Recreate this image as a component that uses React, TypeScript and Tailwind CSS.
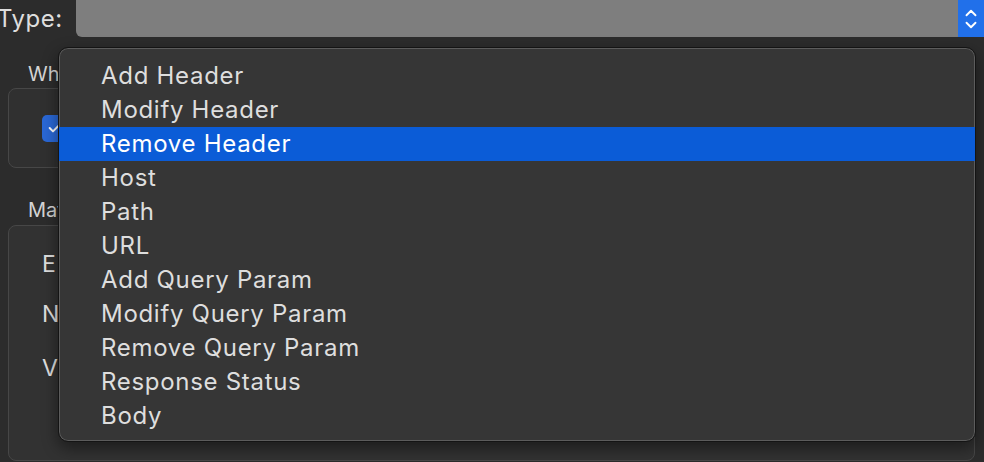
import { ChevronUp, ChevronDown, Check } from "lucide-react";

const items = [
  "Add Header",
  "Modify Header",
  "Remove Header",
  "Host",
  "Path",
  "URL",
  "Add Query Param",
  "Modify Query Param",
  "Remove Query Param",
  "Response Status",
  "Body",
];

const selected = "Remove Header";

export default function App() {
  return (
    <div className="relative w-[984px] h-[462px] overflow-hidden bg-[#2c2c2c] text-[#dedede] font-['Inter','Liberation_Sans',sans-serif]">
      {/* type row */}
      <div className="flex items-start h-[37px]">
        <span className="ml-[-3px] w-[79px] text-[24px] leading-[37px] tracking-[0.5px]">Type:</span>
        <div className="flex-1 h-[37px] bg-[#7e7e7e] rounded-bl-[6px]" />
        <div className="w-[26px] h-[37px] bg-[#2170ea] flex flex-col items-center justify-center text-white">
          <ChevronUp size={18} strokeWidth={2.5} className="-mb-[3px]" />
          <ChevronDown size={18} strokeWidth={2.5} className="-mt-[3px]" />
        </div>
      </div>

      {/* when section */}
      <div className="pl-[8px] pr-[9px]">
        <div className="pl-[20px] mt-[24px] text-[20px] leading-[26px] text-[#d4d4d4]">When</div>
        <div className="mt-[1px] h-[80px] rounded-[8px] border border-[#474747] bg-[#303030] flex items-center pl-[33px]">
          <div className="w-[26px] h-[27px] rounded-[5px] bg-[#2a68d6] flex items-center justify-center text-white">
            <Check size={16} strokeWidth={3} />
          </div>
        </div>

        <div className="pl-[20px] mt-[29px] text-[20px] leading-[26px] text-[#d4d4d4]">Match</div>
        <div className="mt-[2px] h-[236px] rounded-[8px] border border-[#474747] bg-[#323232] pl-[33px] pt-[23px] text-[23px] tracking-[2px]">
          <div className="leading-[30px]">Enabled</div>
          <div className="mt-[20px] leading-[30px]">Name</div>
          <div className="mt-[24px] leading-[30px]">Value</div>
        </div>
      </div>

      {/* popup menu */}
      <div className="absolute left-[58px] top-[47px] w-[918px] h-[395px] rounded-[10px] bg-[#363636] border border-[#141414] shadow-[inset_0_0_0_1px_#5c5c5c,0_6px_16px_rgba(0,0,0,0.45)] pt-[11px]">
        {items.map((item) => (
          <div
            key={item}
            className={
              item === selected
                ? "h-[34px] pl-[42px] flex items-center text-[24px] tracking-[0.7px] text-white bg-[#0b5cd7]"
                : "h-[34px] pl-[42px] flex items-center text-[24px] tracking-[0.7px] text-[#dedede]"
            }
          >
            {item}
          </div>
        ))}
      </div>
    </div>
  );
}
